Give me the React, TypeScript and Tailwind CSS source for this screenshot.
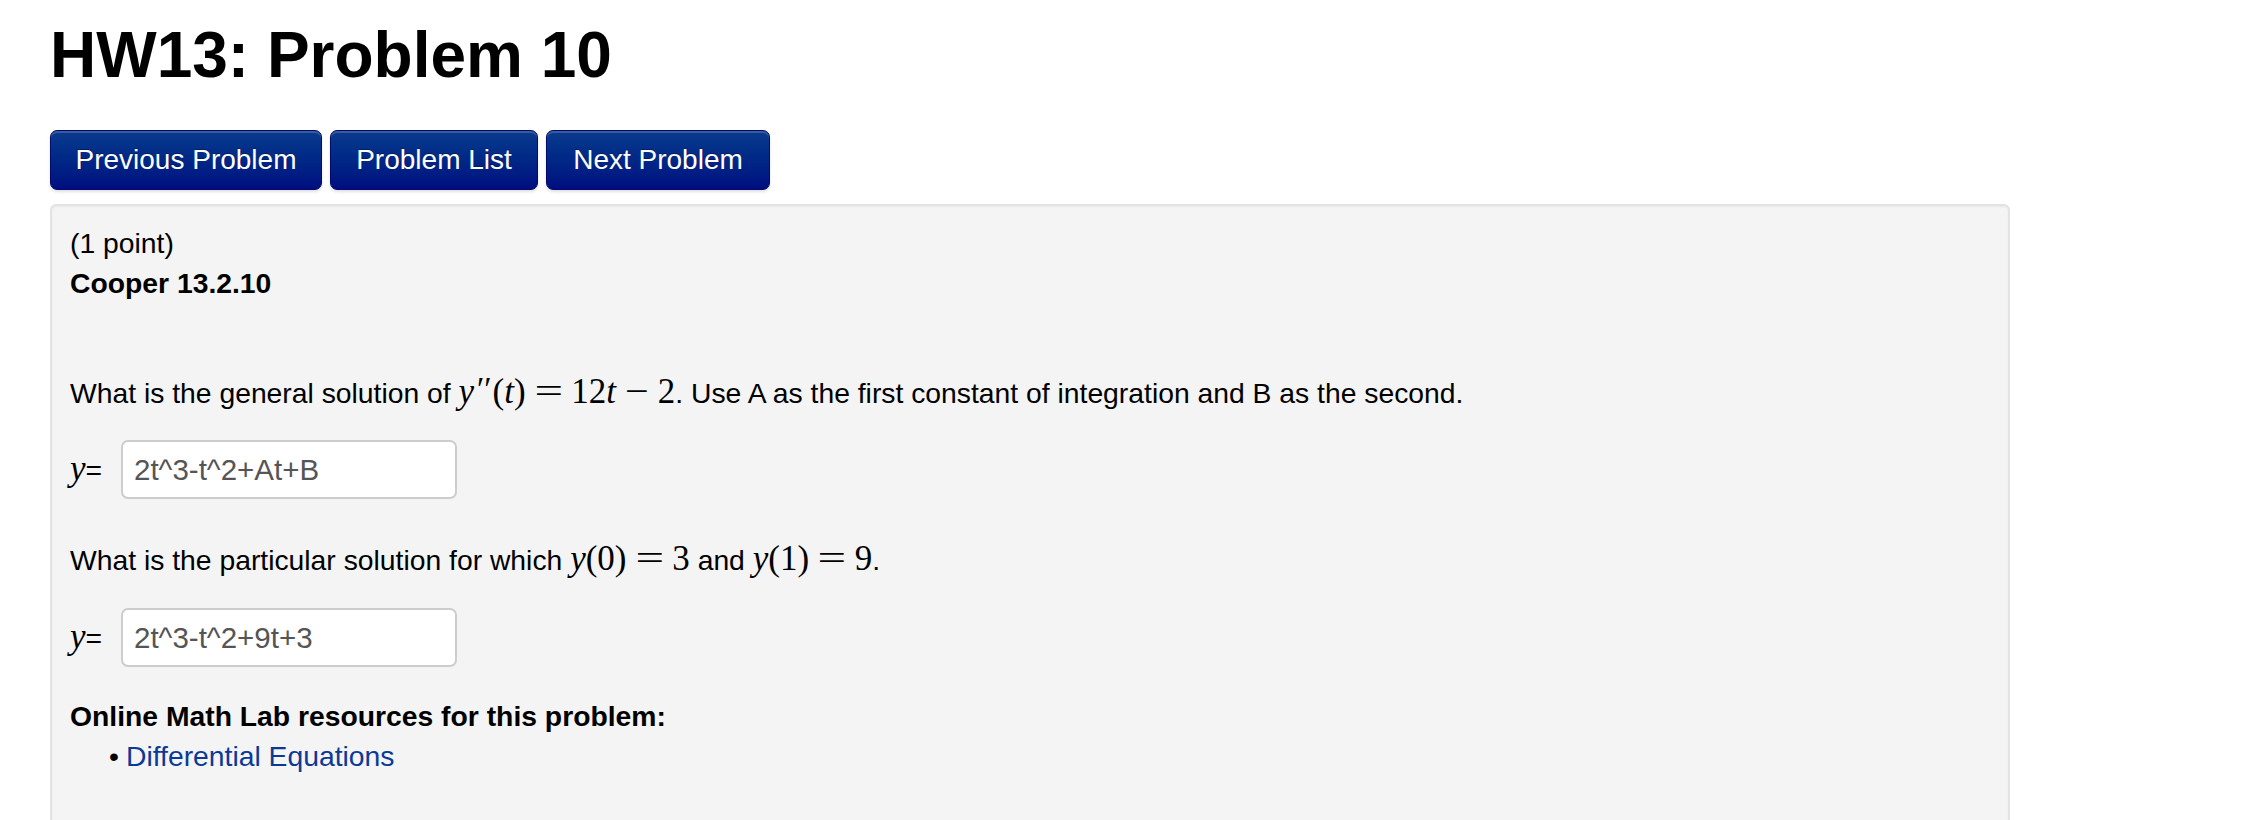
import React from 'react'

const SANS = "font-['Liberation_Sans',Arial,sans-serif]"
const MATH = "font-['Liberation_Serif','Times_New_Roman',serif] text-[35px] leading-none"
// math "=" and "−" are wider in the TeX font than in Times
const EQ = 'inline-block mx-[13px] scale-x-[1.45]'
const MINUS = 'inline-block mx-[11px] scale-x-[1.2]'

function NavButton({ label, width }: { label: string; width: string }) {
  return (
    <button
      type="button"
      className={`${width} h-[60px] rounded-[7px] border border-[#020a6b] bg-gradient-to-b from-[#0b3a8c] to-[#000c80] text-center text-[28px] text-white shadow-[inset_0_2px_0_rgba(255,255,255,0.18),0_2px_3px_rgba(0,0,0,0.12)] [text-shadow:0_-1px_0_rgba(0,0,0,0.3)]`}
    >
      {label}
    </button>
  )
}

function AnswerRow({ value }: { value: string }) {
  return (
    <div className="flex h-[59px] items-center">
      <span className="w-[51px]">
        <span className={`${MATH} italic`}>y</span>
        <span>=</span>
      </span>
      <input
        readOnly
        value={value}
        className="h-[59px] w-[336px] rounded-[7px] border-2 border-[#cdcdcd] bg-white px-[11px] text-[29.5px] text-[#555] outline-none"
      />
    </div>
  )
}

export default function App() {
  return (
    <div className={`${SANS} min-h-screen bg-white pl-[50px] text-black`}>
      <h1 className="pt-[20px] text-[64px] font-bold leading-[70px]">HW13: Problem 10</h1>

      <div className="mt-[40px] flex gap-2">
        <NavButton label="Previous Problem" width="w-[272px]" />
        <NavButton label="Problem List" width="w-[208px]" />
        <NavButton label="Next Problem" width="w-[224px]" />
      </div>

      <div className="mt-[14px] h-[640px] w-[1960px] rounded-[6px] border-2 border-[#e3e3e3] bg-[#f4f4f4] px-[18px] pt-[17px] text-[28.3px] leading-[40px] shadow-[inset_0_1px_2px_rgba(0,0,0,0.05)]">
        <p>(1 point)</p>
        <p className="font-bold">Cooper 13.2.10</p>

        <p className="mt-[70px]">
          What is the general solution of{' '}
          <span className={MATH}>
            <span className="italic">y</span>
            <span className="relative top-[-3px] ml-[1px] mr-[3px] text-[33px] italic">′′</span>
            <span>(</span>
            <span className="italic">t</span>
            <span>)</span>
            <span className={EQ}>=</span>
            <span>12</span>
            <span className="italic">t</span>
            <span className={MINUS}>−</span>
            <span>2</span>
          </span>
          . Use A as the first constant of integration and B as the second.
        </p>

        <div className="mt-[27px]">
          <AnswerRow value="2t^3-t^2+At+B" />
        </div>

        <p className="mt-[41px]">
          What is the particular solution for which{' '}
          <span className={MATH}>
            <span className="italic">y</span>
            <span>(0)</span>
            <span className={EQ}>=</span>
            <span>3</span>
          </span>{' '}
          and{' '}
          <span className={MATH}>
            <span className="italic">y</span>
            <span>(1)</span>
            <span className={EQ}>=</span>
            <span>9</span>
          </span>
          .
        </p>

        <div className="mt-[28px]">
          <AnswerRow value="2t^3-t^2+9t+3" />
        </div>

        <p className="mt-[29px] font-bold">Online Math Lab resources for this problem:</p>
        <ul className="pl-[39px]">
          <li className="flex">
            <span className="w-[17px]">•</span>
            <a href="#" className="text-[#0b3a96]">
              Differential Equations
            </a>
          </li>
        </ul>
      </div>
    </div>
  )
}
